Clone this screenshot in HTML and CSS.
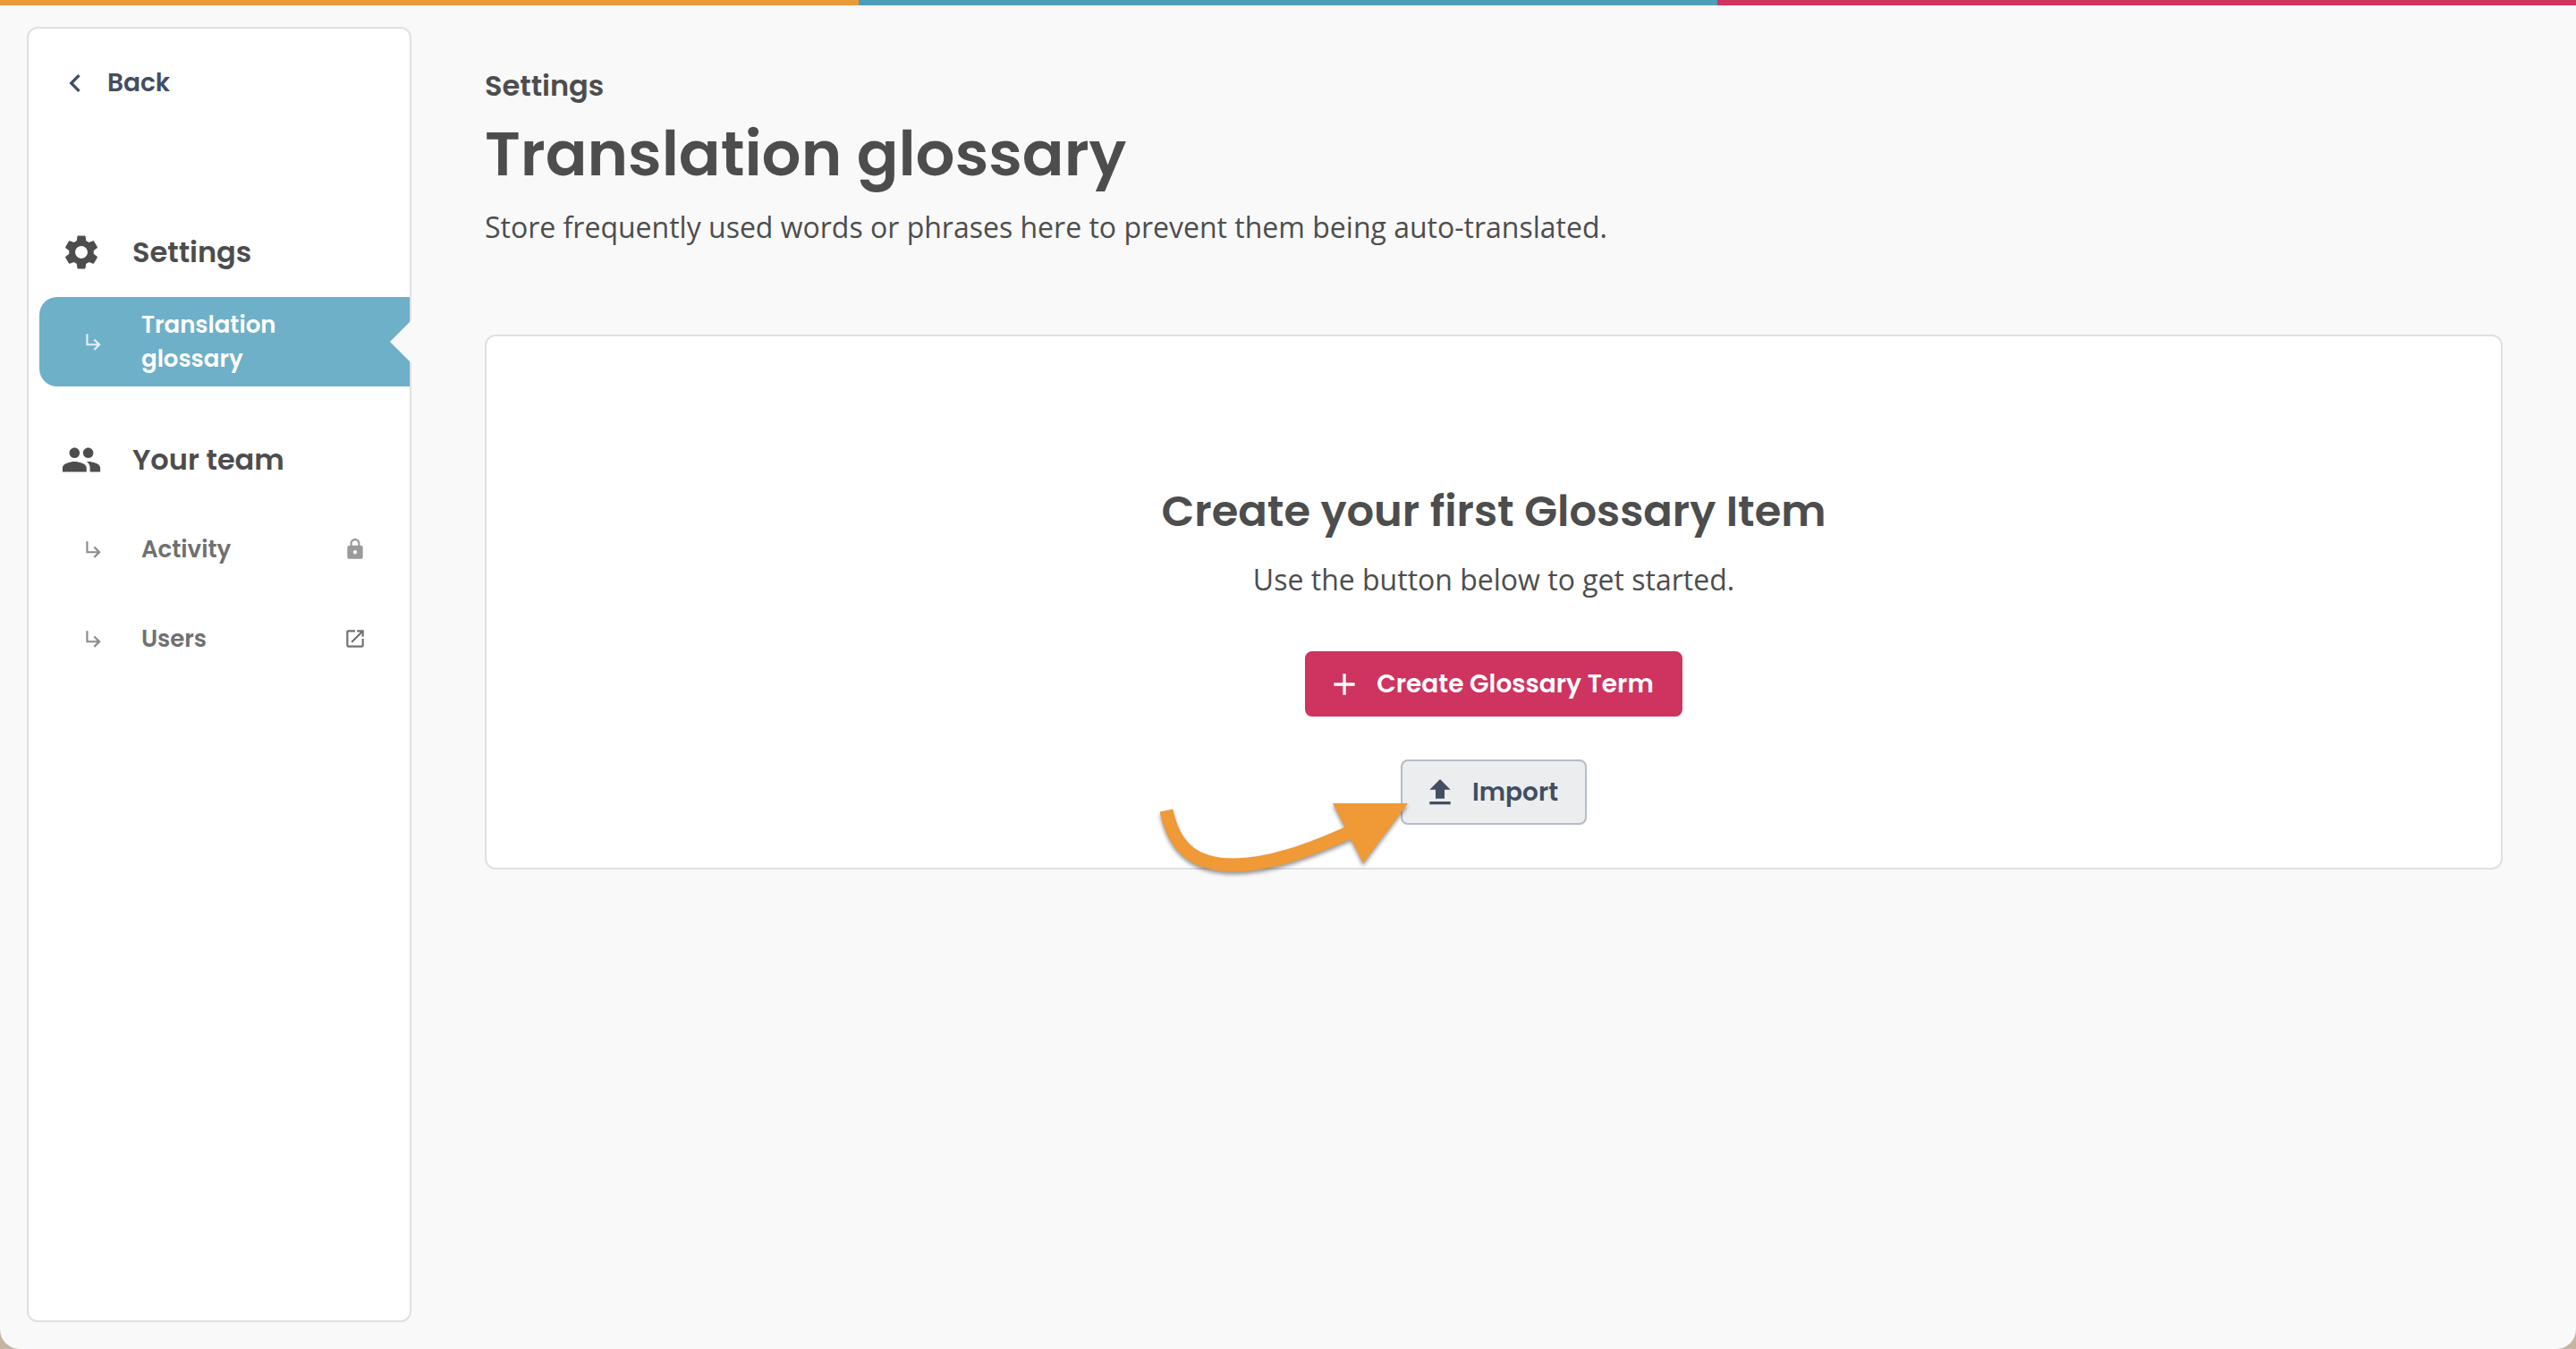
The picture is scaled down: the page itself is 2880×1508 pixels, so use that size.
FILE: index.html
```html
<!DOCTYPE html>
<html lang="en">

<head>
  <meta charset="UTF-8">
  <meta name="viewport" content="width=device-width, initial-scale=1.0">
  <title>Translation glossary</title>
  <link rel="stylesheet" href="styles.css">
</head>

<body>
  <div class="app">
    <div class="top-bar">
      <span class="orange"></span>
      <span class="blue"></span>
      <span class="pink"></span>
    </div>

    <div class="layout">
      <aside class="sidebar">
        <a class="back" href="#">
          <svg class="icon-back" viewBox="0 0 24 24"><path d="M15.41 7.41 14 6l-6 6 6 6 1.41-1.41L10.83 12z"/></svg>
          Back
        </a>

        <nav>
          <section class="nav-group">
            <h2 class="nav-title">
              <svg class="icon-group" viewBox="0 0 24 24"><path d="M19.14 12.94c.04-.3.06-.61.06-.94s-.02-.64-.07-.94l2.03-1.58c.18-.14.23-.41.12-.61l-1.92-3.32c-.12-.22-.37-.29-.59-.22l-2.39.96c-.5-.38-1.03-.7-1.62-.94l-.36-2.54c-.04-.24-.24-.41-.48-.41h-3.84c-.24 0-.43.17-.47.41l-.36 2.54c-.59.24-1.13.57-1.62.94l-2.39-.96c-.22-.08-.47 0-.59.22L2.74 8.87c-.12.21-.08.47.12.61l2.03 1.58c-.05.3-.09.63-.09.94s.02.64.07.94l-2.03 1.58c-.18.14-.23.41-.12.61l1.92 3.32c.12.22.37.29.59.22l2.39-.96c.5.38 1.03.7 1.62.94l.36 2.54c.05.24.24.41.48.41h3.84c.24 0 .44-.17.47-.41l.36-2.54c.59-.24 1.13-.56 1.62-.94l2.39.96c.22.08.47 0 .59-.22l1.92-3.32c.12-.22.07-.47-.12-.61l-2.01-1.58zM12 15.6c-1.98 0-3.6-1.62-3.6-3.6s1.62-3.6 3.6-3.6 3.6 1.62 3.6 3.6-1.62 3.6-3.6 3.6z"/></svg>
              Settings
            </h2>
            <a class="nav-item is-active" href="#">
              <svg class="icon-sub" viewBox="0 0 24 24"><path d="m19 15-6 6-1.42-1.42L15.17 16H4V4h2v10h9.17l-3.59-3.58L13 9z"/></svg>
              <span class="nav-text">Translation glossary</span>
            </a>
          </section>

          <section class="nav-group">
            <h2 class="nav-title">
              <svg class="icon-group" viewBox="0 0 24 24"><path d="M16 11c1.66 0 2.99-1.34 2.99-3S17.66 5 16 5s-3 1.34-3 3 1.34 3 3 3zm-8 0c1.66 0 2.99-1.34 2.99-3S9.66 5 8 5 5 6.34 5 8s1.34 3 3 3zm0 2c-2.33 0-7 1.17-7 3.5V19h14v-2.5c0-2.33-4.67-3.5-7-3.5zm8 0c-.29 0-.62.02-.97.05 1.16.84 1.97 1.97 1.97 3.45V19h6v-2.5c0-2.33-4.67-3.5-7-3.5z"/></svg>
              Your team
            </h2>
            <a class="nav-item" href="#">
              <svg class="icon-sub" viewBox="0 0 24 24"><path d="m19 15-6 6-1.42-1.42L15.17 16H4V4h2v10h9.17l-3.59-3.58L13 9z"/></svg>
              <span class="nav-text">Activity</span>
              <svg class="icon-end is-faded" viewBox="0 0 24 24"><path d="M18 8h-1V6c0-2.76-2.24-5-5-5S7 3.24 7 6v2H6c-1.1 0-2 .9-2 2v10c0 1.1.9 2 2 2h12c1.1 0 2-.9 2-2V10c0-1.1-.9-2-2-2zm-6 9c-1.1 0-2-.9-2-2s.9-2 2-2 2 .9 2 2-.9 2-2 2zm3.1-9H8.9V6c0-1.71 1.39-3.1 3.1-3.1s3.1 1.39 3.1 3.1v2z"/></svg>
            </a>
            <a class="nav-item" href="#">
              <svg class="icon-sub" viewBox="0 0 24 24"><path d="m19 15-6 6-1.42-1.42L15.17 16H4V4h2v10h9.17l-3.59-3.58L13 9z"/></svg>
              <span class="nav-text">Users</span>
              <svg class="icon-end" viewBox="0 0 24 24"><path d="M19 19H5V5h7V3H5c-1.11 0-2 .9-2 2v14c0 1.1.89 2 2 2h14c1.1 0 2-.9 2-2v-7h-2v7zM14 3v2h3.59l-9.83 9.83 1.41 1.41L19 6.41V10h2V3h-7z"/></svg>
            </a>
          </section>
        </nav>
      </aside>

      <main class="content">
        <p class="eyebrow">Settings</p>
        <h1 class="title">Translation glossary</h1>
        <p class="text">Store frequently used words or phrases here to prevent them being auto-translated.</p>

        <div class="card">
          <h2 class="card-title">Create your first Glossary Item</h2>
          <p class="text">Use the button below to get started.</p>
          <button class="button button-primary" type="button">
            <svg class="icon-button" viewBox="0 0 24 24"><path d="M19 13h-6v6h-2v-6H5v-2h6V5h2v6h6z"/></svg>
            Create Glossary Term
          </button>
          <div class="import">
            <button class="button button-secondary" type="button">
              <svg class="icon-button" viewBox="0 0 24 24"><path d="M9 16h6v-6h4l-7-7-7 7h4zm-4 2h14v2H5z"/></svg>
              Import
            </button>
            <svg class="pointer" viewBox="0 0 290 90">
              <path class="pointer-line" d="M14 17C22 56 43 78 89 78C129 78 173 62 222 40"/>
              <path class="pointer-head" d="M200 9h84l-50 67z"/>
            </svg>
          </div>
        </div>
      </main>
    </div>
  </div>
</body>

</html>
```
FILE: styles.css
```css
* {
  margin: 0;
  padding: 0;
  box-sizing: border-box;
}

body {
  background: #c4b5a3;
  color: #4d4d4d;
  font-family: Poppins, Inter, sans-serif;
  font-weight: 600;
}

a {
  color: inherit;
  text-decoration: none;
}

svg {
  flex: none;
  fill: currentColor;
}

.app {
  display: flex;
  flex-direction: column;
  min-height: 100vh;
  background: #f9f9f9;
  border-radius: 0 0 22px 22px;
}

.top-bar {
  display: flex;
  height: 6px;
}

.top-bar span {
  flex: 1;
}

.orange {
  background: #e99a38;
}

.blue {
  background: #4c9db8;
}

.pink {
  background: #ce345f;
}

.layout {
  display: flex;
  flex: 1;
  gap: 82px;
  padding: 24px 82px 30px 30px;
}

/* sidebar */
.sidebar {
  flex: none;
  width: 430px;
  background: #fff;
  border: 2px solid #e0e0e0;
  border-radius: 12px;
}

.back {
  display: flex;
  align-items: center;
  gap: 16px;
  height: 122px;
  padding-left: 32px;
  margin-bottom: 78px;
  color: #424e61;
  font-size: 28px;
}

.nav-group {
  padding-left: 12px;
  margin-bottom: 32px;
}

.nav-title {
  display: flex;
  align-items: center;
  gap: 34px;
  height: 100px;
  padding-left: 24px;
  font-size: 32px;
  font-weight: 600;
}

.nav-item {
  display: flex;
  align-items: center;
  position: relative;
  height: 100px;
  padding: 0 48px;
  color: #707070;
  font-size: 26px;
  line-height: 38px;
}

.nav-text {
  flex: 1;
  padding: 0 40px;
}

.nav-item.is-active {
  background: #6eb0c8;
  border-radius: 20px 0 0 20px;
  color: #fff;
}

/* notch that points at the content */
.nav-item.is-active::after {
  content: '';
  position: absolute;
  top: 26px;
  right: -2px;
  width: 24px;
  height: 48px;
  background: #f9f9f9;
  clip-path: polygon(100% 0, 100% 100%, 0 50%);
}

.icon-back {
  width: 40px;
  height: 40px;
}

.icon-group {
  width: 46px;
  height: 46px;
}

.icon-sub {
  width: 26px;
  height: 26px;
  opacity: .8;
}

.icon-end {
  width: 26px;
  height: 26px;
}

.icon-end.is-faded {
  opacity: .7;
}

/* content */
.content {
  flex: 1;
  padding-top: 42px;
}

.eyebrow {
  font-size: 32px;
  line-height: 48px;
}

.title {
  margin-bottom: 2px;
  font-size: 69px;
  font-weight: 600;
  line-height: 104px;
}

.text {
  font-family: "Open Sans", sans-serif;
  font-size: 32px;
  font-weight: 400;
  line-height: 56px;
}

.card {
  display: flex;
  flex-direction: column;
  align-items: center;
  margin-top: 92px;
  padding: 160px 48px 48px;
  background: #fff;
  border: 2px solid #e0e0e0;
  border-radius: 12px;
}

.card-title {
  margin-bottom: 12px;
  font-size: 48px;
  font-weight: 600;
  line-height: 72px;
}

.button {
  display: flex;
  align-items: center;
  gap: 16px;
  height: 73px;
  padding: 0 30px 0 22px;
  border: 2px solid;
  border-radius: 8px;
  font: inherit;
  font-size: 28px;
  cursor: pointer;
}

.button-primary {
  margin: 52px 0 48px;
  background: #ce345f;
  border-color: #ce345f;
  color: #fff;
}

.button-secondary {
  background: #ebedef;
  border-color: #b5bcc4;
  color: #424e61;
}

.icon-button {
  width: 40px;
  height: 40px;
}

.import {
  position: relative;
}

/* hand-drawn arrow over the import button */
.pointer {
  position: absolute;
  top: 40px;
  right: 194px;
  width: 290px;
  height: 90px;
  overflow: visible;
  filter: drop-shadow(0 3px 2px rgba(0, 0, 0, .4));
  pointer-events: none;
}

.pointer-line {
  fill: none;
  stroke: #ef9937;
  stroke-width: 15;
}

.pointer-head {
  fill: #ef9937;
}
```
